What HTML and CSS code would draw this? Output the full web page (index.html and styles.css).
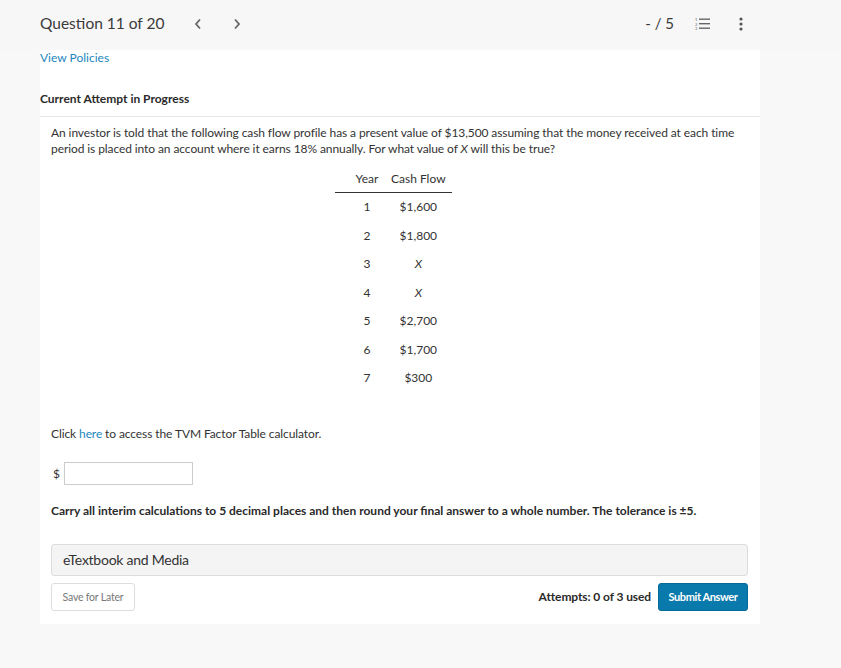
FILE: index.html
```html
<!DOCTYPE html>
<html>
<head>
<meta charset="utf-8">
<link rel="stylesheet" href="styles.css">
</head>
<body>
<header class="topbar">
  <div class="topbar-inner">
    <div class="q-title">Question 11 of 20</div>
    <div class="nav-arrows">
      <svg class="chev" width="8" height="12" viewBox="0 0 8 12"><path d="M6 1.5 L2 6 L6 10.5" fill="none" stroke="#666" stroke-width="1.8"/></svg>
      <svg class="chev" width="8" height="12" viewBox="0 0 8 12"><path d="M2 1.5 L6 6 L2 10.5" fill="none" stroke="#666" stroke-width="1.8"/></svg>
    </div>
    <div class="spacer"></div>
    <div class="score">- / 5</div>
    <svg class="list-icon" width="16" height="14" viewBox="0 0 16 14">
      <text x="0" y="4" font-size="4" fill="#666" font-family="Lato, sans-serif">1</text>
      <text x="0" y="8.5" font-size="4" fill="#666" font-family="Lato, sans-serif">2</text>
      <text x="0" y="13" font-size="4" fill="#666" font-family="Lato, sans-serif">3</text>
      <rect x="4" y="1.5" width="11" height="1.4" fill="#666"/>
      <rect x="4" y="6" width="11" height="1.4" fill="#666"/>
      <rect x="4" y="10.5" width="11" height="1.4" fill="#666"/>
    </svg>
    <svg class="dots" width="4" height="14" viewBox="0 0 4 14">
      <circle cx="2" cy="2" r="1.6" fill="#555"/>
      <circle cx="2" cy="7" r="1.6" fill="#555"/>
      <circle cx="2" cy="12" r="1.6" fill="#555"/>
    </svg>
  </div>
</header>
<main class="card">
  <a class="policies">View Policies</a>
  <div class="attempt-title">Current Attempt in Progress</div>
  <div class="content">
    <p class="question">An investor is told that the following cash flow profile has a present value of $13,500 assuming that the money received at each time period is placed into an account where it earns 18% annually. For what value of <em>X</em> will this be true?</p>
    <table class="cf">
      <thead><tr><th class="c1">Year</th><th class="c2">Cash Flow</th></tr></thead>
      <tbody>
        <tr><td class="c1">1</td><td class="c2">$1,600</td></tr>
        <tr><td class="c1">2</td><td class="c2">$1,800</td></tr>
        <tr><td class="c1">3</td><td class="c2"><em>X</em></td></tr>
        <tr><td class="c1">4</td><td class="c2"><em>X</em></td></tr>
        <tr><td class="c1">5</td><td class="c2">$2,700</td></tr>
        <tr><td class="c1">6</td><td class="c2">$1,700</td></tr>
        <tr><td class="c1">7</td><td class="c2">$300</td></tr>
      </tbody>
    </table>
    <p class="click">Click <a class="link">here</a> to access the TVM Factor Table calculator.</p>
    <div class="answer"><span class="dollar">$</span><span class="input"></span></div>
    <p class="note">Carry all interim calculations to 5 decimal places and then round your final answer to a whole number. The tolerance is ±5.</p>
    <div class="etext">eTextbook and Media</div>
    <div class="actions">
      <button class="save">Save for Later</button>
      <div class="spacer"></div>
      <span class="attempts">Attempts: 0 of 3 used</span>
      <button class="submit">Submit Answer</button>
    </div>
  </div>
</main>
</body>
</html>
```
FILE: styles.css
```css
html, body {
  margin: 0;
  padding: 0;
  background: #f8f8f8;
  font-family: Lato, "Noto Sans", sans-serif;
  color: #333;
}
.topbar {
  height: 50px;
  background: #f7f7f7;
}
.topbar-inner {
  width: 720px;
  margin-left: 40px;
  height: 50px;
  display: flex;
  align-items: center;
  padding-bottom: 4px;
  box-sizing: border-box;
}
.q-title {
  font-size: 15.5px;
  color: #3a3a3a;
}
.nav-arrows {
  display: flex;
  gap: 31px;
  margin-left: 30px;
  margin-top: 2px;
}
.spacer { flex: 1; }
.score {
  font-size: 15px;
  color: #3a3a3a;
  margin-right: 21px;
}
.list-icon { margin-right: 28px; margin-top: 2px; }
.dots { margin-right: 17px; margin-top: 2px; }
.card {
  width: 720px;
  margin-left: 40px;
  background: #fff;
  padding-bottom: 13px;
}
.policies {
  display: block;
  font-size: 12px;
  color: #1d87bd;
  line-height: 16px;
}
.attempt-title {
  font-size: 12px;
  font-weight: bold;
  color: #2a2a2a;
  line-height: 16px;
  margin-top: 25px;
  padding-bottom: 9px;
  border-bottom: 1px solid #e8e8e8;
}
.content {
  padding: 0 12px 0 11px;
}
.question {
  margin: 8px 0 0 0;
  font-size: 12px;
  line-height: 16px;
  color: #333;
  letter-spacing: -0.09px;
}
em {
  font-style: italic;
}
.cf {
  border-collapse: collapse;
  margin: 8px 0 0 284px;
  font-size: 12px;
  color: #333;
}
.cf th {
  font-weight: normal;
  height: 27px;
  border-bottom: 1.5px solid #333;
  padding-top: 0;
  padding-bottom: 0;
  line-height: 16px;
  white-space: nowrap;
}
.cf td {
  height: 28.5px;
  padding-top: 0;
  padding-bottom: 0;
  line-height: 16px;
  white-space: nowrap;
}
.cf .c1 { padding-left: 20px; padding-right: 6px; text-align: center; width: 24px; }
.cf .c2 { padding-left: 6px; padding-right: 6px; text-align: center; width: 54px; }
.click {
  margin: 33px 0 0 0;
  font-size: 12px;
  line-height: 16px;
  letter-spacing: -0.1px;
}
.link { color: #1d87bd; }
.answer {
  display: flex;
  align-items: center;
  margin-top: 20px;
}
.dollar {
  font-size: 12px;
  width: 13px;
  padding-left: 2px;
  box-sizing: border-box;
}
.input {
  width: 129px;
  height: 23px;
  border: 1px solid #ccc;
  box-sizing: border-box;
  background: #fff;
}
.note {
  margin: 18px 0 0 0;
  font-size: 12px;
  font-weight: bold;
  line-height: 16px;
  color: #2a2a2a;
}
.etext {
  margin-top: 25px;
  height: 32px;
  box-sizing: border-box;
  background: #f4f4f4;
  border: 1px solid #ddd;
  border-radius: 3px;
  padding-left: 11px;
  font-size: 14px;
  line-height: 30px;
  color: #333;
  letter-spacing: -0.25px;
}
.actions {
  display: flex;
  align-items: center;
  margin-top: 7px;
}
.save {
  width: 84px;
  height: 28px;
  background: #fff;
  border: 1px solid #ddd;
  border-radius: 3px;
  font-family: Lato, sans-serif;
  font-size: 10.5px;
  color: #777;
  padding: 0;
  letter-spacing: -0.2px;
}
.attempts {
  font-size: 12px;
  font-weight: bold;
  color: #2a2a2a;
  margin-right: 7px;
  letter-spacing: -0.1px;
}
.submit {
  width: 90px;
  height: 28px;
  background: #0a79ab;
  border: 1px solid #066b99;
  border-radius: 3px;
  color: #fff;
  font-family: Lato, sans-serif;
  font-size: 11px;
  font-weight: bold;
  padding: 0;
  letter-spacing: -0.4px;
}
```
